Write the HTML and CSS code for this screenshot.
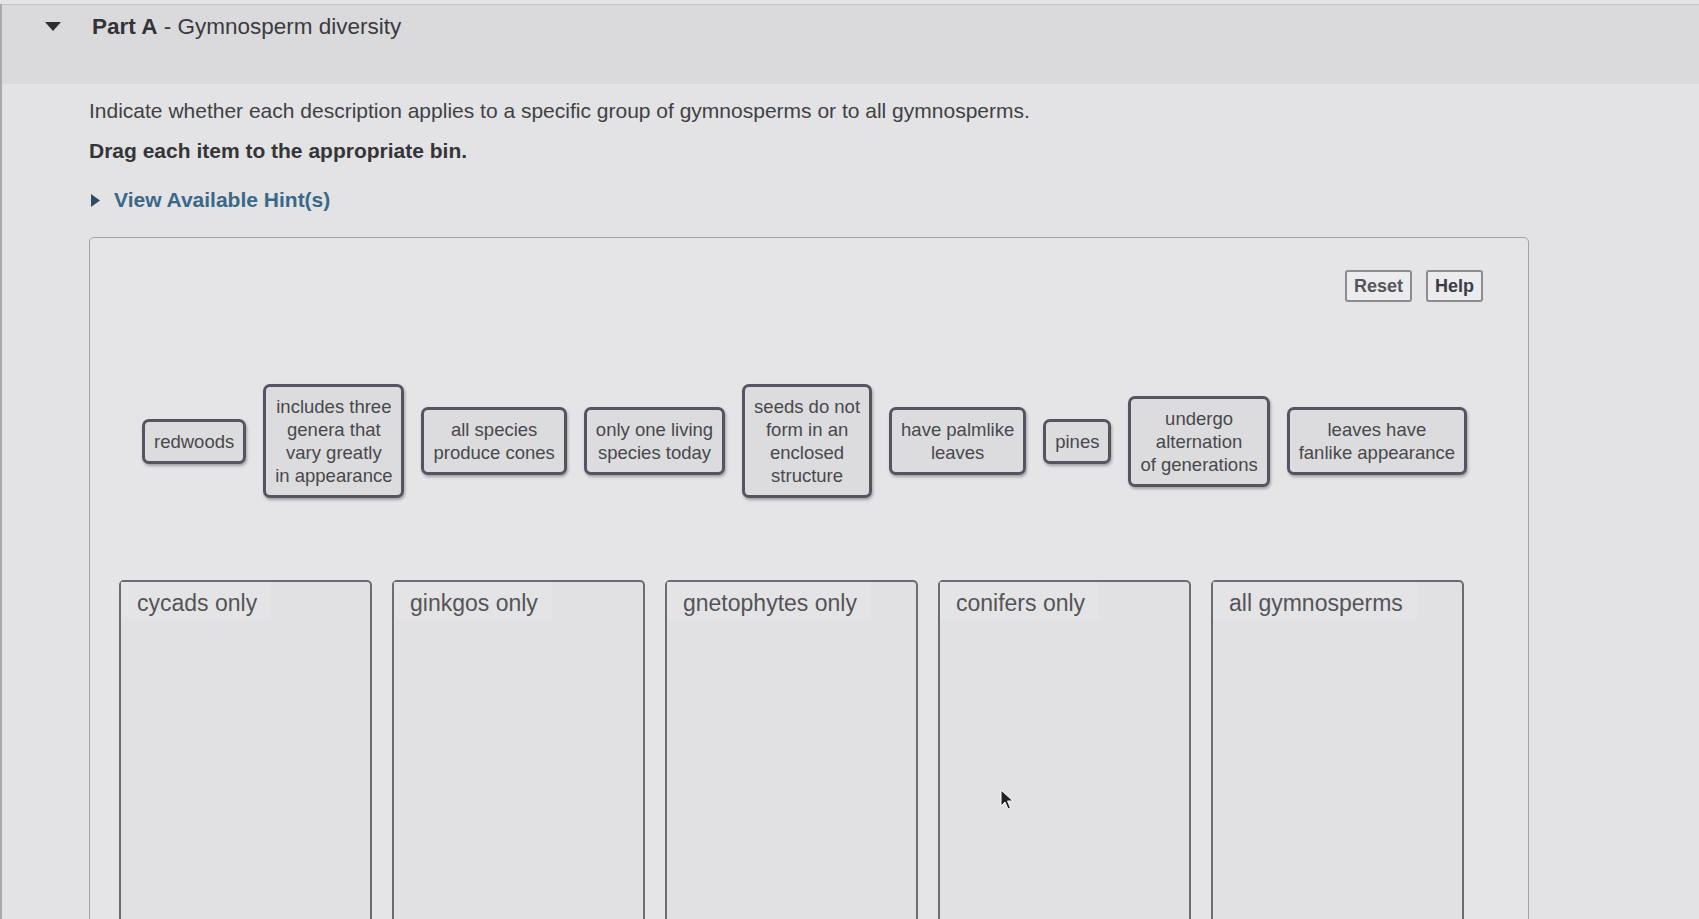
FILE: index.html
```html
<!DOCTYPE html>
<html lang="en">
<head>
<meta charset="utf-8">
<title>Part A - Gymnosperm diversity</title>
<link rel="stylesheet" href="styles.css">
</head>
<body>
<div class="page">
  <header class="part-header">
    <svg class="caret-down" width="16" height="9" viewBox="0 0 16 9"><polygon points="0,0 16,0 8,9" fill="#2f2f33"/></svg>
    <h1 class="part-title"><span class="part-label">Part A</span> - Gymnosperm diversity</h1>
  </header>

  <main class="part-body">
    <p class="instructions">Indicate whether each description applies to a specific group of gymnosperms or to all gymnosperms.</p>
    <p class="directive">Drag each item to the appropriate bin.</p>
    <div class="hint-toggle">
      <svg class="caret-right" width="9" height="13" viewBox="0 0 9 13"><polygon points="0,0 9,6.5 0,13" fill="#2c4b66"/></svg>
      <span class="hint-text">View Available Hint(s)</span>
    </div>

    <section class="dnd-box">
      <div class="toolbar">
        <button class="tool-btn reset">Reset</button>
        <button class="tool-btn help">Help</button>
      </div>

      <div class="items">
        <div class="item">redwoods</div>
        <div class="item">includes three<br>genera that<br>vary greatly<br>in appearance</div>
        <div class="item">all species<br>produce cones</div>
        <div class="item">only one living<br>species today</div>
        <div class="item">seeds do not<br>form in an<br>enclosed<br>structure</div>
        <div class="item">have palmlike<br>leaves</div>
        <div class="item">pines</div>
        <div class="item">undergo<br>alternation<br>of generations</div>
        <div class="item">leaves have<br>fanlike appearance</div>
      </div>

      <div class="bins">
        <div class="bin"><div class="bin-label">cycads only</div></div>
        <div class="bin"><div class="bin-label">ginkgos only</div></div>
        <div class="bin"><div class="bin-label">gnetophytes only</div></div>
        <div class="bin"><div class="bin-label">conifers only</div></div>
        <div class="bin"><div class="bin-label">all gymnosperms</div></div>
      </div>
    </section>
  </main>

  <svg class="cursor" width="14" height="22" viewBox="0 0 14 22"><path d="M1 1 L1 17 L5 13 L8 20 L10.5 19 L7.5 12 L13 12 Z" fill="#222" stroke="#fff" stroke-width="1"/></svg>
</div>
</body>
</html>
```

FILE: styles.css
```css
* { box-sizing: border-box; }

html, body {
  margin: 0;
  padding: 0;
  height: 100%;
  overflow: hidden;
}

body {
  background: #e3e3e5;
  font-family: "Liberation Sans", Arial, sans-serif;
  color: #3c3c3e;
}

.page {
  position: relative;
  min-height: 919px;
  border-left: 2px solid #a9a9ad;
}

.part-header {
  margin-top: 4px;
  height: 80px;
  border-top: 1px solid #c4c4c8;
  background: #dadadd;
  display: flex;
  align-items: flex-start;
  padding: 9px 0 0 43px;
}

.caret-down {
  margin-top: 8px;
  flex: none;
}

.part-title {
  margin: 0 0 0 31px;
  font-size: 22.5px;
  line-height: 26px;
  font-weight: normal;
  color: #3b3b3e;
}

.part-label {
  font-weight: bold;
  color: #333336;
}

.part-body {
  padding: 0 0 0 87px;
}

.instructions {
  margin: 15px 0 0;
  font-size: 21px;
  line-height: 24px;
  color: #414144;
}

.directive {
  margin: 16px 0 0;
  font-size: 21px;
  line-height: 24px;
  font-weight: bold;
  color: #353538;
}

.hint-toggle {
  margin-top: 25px;
  display: flex;
  align-items: center;
  height: 24px;
}

.caret-right {
  margin-left: 2px;
  flex: none;
}

.hint-text {
  margin-left: 14px;
  font-size: 21px;
  font-weight: bold;
  color: #3a6888;
}

.dnd-box {
  margin-top: 25px;
  width: 1440px;
  min-height: 720px;
  border: 1px solid #a2a2a7;
  border-radius: 5px;
  background: #e5e5e7;
  padding: 32px 45px 0 0;
}

.toolbar {
  display: flex;
  justify-content: flex-end;
  gap: 14px;
}

.tool-btn {
  height: 32px;
  padding: 0 7px;
  border: 2px solid #8c8c92;
  border-radius: 3px;
  background: #ececee;
  font-family: "Liberation Sans", Arial, sans-serif;
  font-size: 18px;
  font-weight: bold;
  color: #56565a;
}

.tool-btn.help { color: #3c3c44; }

.items {
  margin-top: 78px;
  padding-left: 52px;
  display: flex;
  align-items: center;
  gap: 17px;
  height: 122px;
}

.item {
  flex: none;
  padding: 8px 9px;
  border: 3px solid #555562;
  border-radius: 7px;
  background: #dcdcdf;
  box-shadow: 1px 2px 3px rgba(0, 0, 0, 0.3);
  font-size: 18.5px;
  line-height: 23px;
  text-align: center;
  white-space: nowrap;
  color: #48484b;
}

.bins {
  margin-top: 78px;
  padding-left: 29px;
  display: flex;
  gap: 20px;
}

.bin {
  width: 253px;
  height: 360px;
  border: 2px solid #6c6c76;
  border-radius: 5px;
  background: #e1e1e3;
}

.bin-label {
  display: inline-block;
  padding: 8px 14px 4px 16px;
  background: #e4e4e6;
  font-size: 23px;
  line-height: 26px;
  color: #545457;
}

.cursor {
  position: absolute;
  left: 998px;
  top: 785px;
}
```
